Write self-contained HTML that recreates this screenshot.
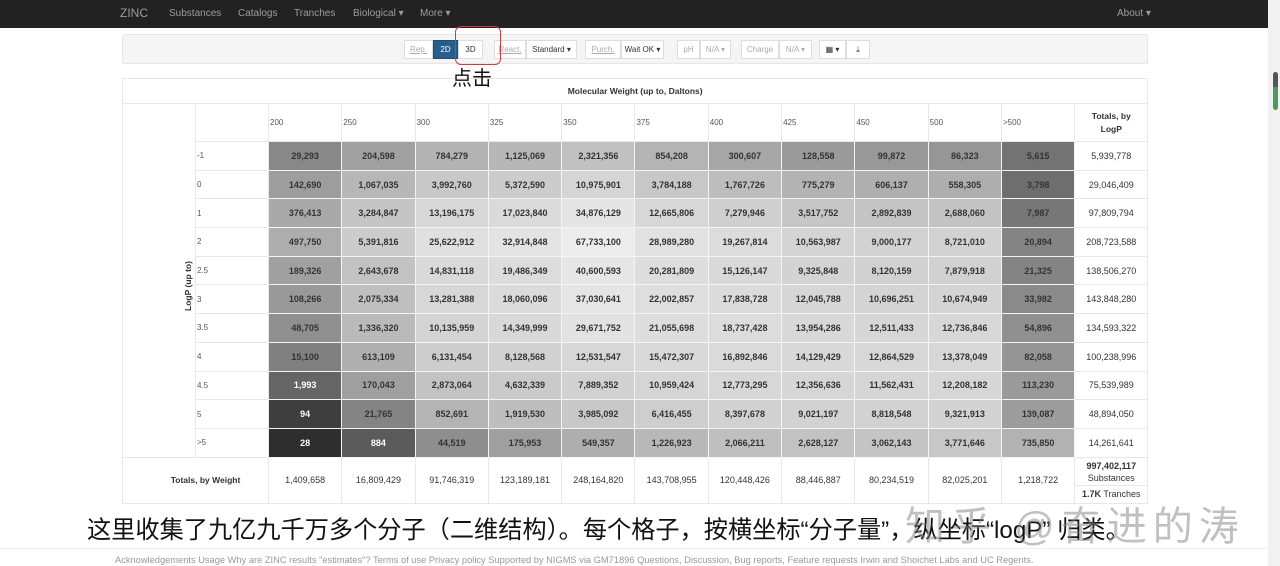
<!DOCTYPE html>
<html><head><meta charset="utf-8"><style>
*{box-sizing:border-box;margin:0;padding:0}
body{width:1280px;height:566px;overflow:hidden;background:#fff;font-family:"Liberation Sans",Arial,sans-serif;position:relative;color:#333}
.nav{position:absolute;left:0;top:0;width:1268px;height:28px;background:#222;color:#9d9d9d;font-size:10px}
.nav span{position:absolute;top:8px}
.sb{position:absolute;left:1268px;top:0;width:12px;height:566px;background:#f1f1f1}
.thumb{position:absolute;left:1273px;top:72px;width:5px;height:38px;border-radius:3px;background:linear-gradient(#555 0,#555 40%,#4c9a60 40%,#4c9a60 100%)}
.tb{position:absolute;left:122px;top:34px;width:1026px;height:30px;background:#f5f5f5;border:1px solid #e6e6e6;border-radius:2px}
.b{position:absolute;top:40px;height:19px;border:1px solid #ddd;background:#fff;font-size:8px;color:#333;text-align:center;line-height:17px}
.b.g{color:#aaa}
.b u{color:#aaa}
table{position:absolute;left:122px;top:78px;border-collapse:collapse;table-layout:fixed;width:1026px}
td{border:1px solid #e8e8e8;font-size:9px;text-align:center;height:28.7px;padding:0;color:#333;font-weight:bold}
td.w{font-weight:normal;background:#fff}
td.h{font-weight:normal;text-align:left;font-size:8px;color:#555;padding-left:1px}
.cap{position:absolute;left:87px;top:510px;font-size:24.2px;font-family:"Liberation Sans","Noto Sans CJK SC",sans-serif;color:#111;white-space:nowrap}
.wm{position:absolute;left:905px;top:494px;font-size:40px;font-family:"Liberation Sans","Noto Sans CJK SC",sans-serif;color:rgba(130,130,130,.5);white-space:nowrap;letter-spacing:6px}
.foot{position:absolute;left:0;top:548px;width:1268px;border-top:1px solid #eee;font-size:9.3px;color:#999;padding-left:115px;padding-top:6px;white-space:nowrap}
</style></head><body>
<div class="nav">
<span style="left:120px;top:6px;font-size:12px;color:#9d9d9d">ZINC</span>
<span style="left:169px">Substances</span><span style="left:238px">Catalogs</span><span style="left:294px">Tranches</span><span style="left:353px">Biological ▾</span><span style="left:420px">More ▾</span>
<span style="left:1117px">About ▾</span>
</div>
<div class="sb"></div><div class="thumb"></div>
<div class="tb"></div>
<div class="b g" style="left:404px;width:29px"><u>Rep.</u></div>
<div class="b" style="left:433px;width:25px;background:#285e8e;border-color:#204d74;color:#fff">2D</div>
<div class="b" style="left:458px;width:25px">3D</div>
<div class="b g" style="left:494px;width:32px"><u>React.</u></div>
<div class="b" style="left:526px;width:51px">Standard ▾</div>
<div class="b g" style="left:585px;width:36px"><u>Purch.</u></div>
<div class="b" style="left:621px;width:43px">Wait OK ▾</div>
<div class="b g" style="left:677px;width:23px">pH</div>
<div class="b g" style="left:700px;width:31px">N/A ▾</div>
<div class="b g" style="left:741px;width:38px">Charge</div>
<div class="b g" style="left:779px;width:33px">N/A ▾</div>
<div class="b" style="left:819px;width:27px">▦ ▾</div>
<div class="b" style="left:846px;width:24px">⤓</div>
<div style="position:absolute;left:455px;top:26px;width:46px;height:39px;border:1.5px solid #d43a3a;border-radius:6px"></div>
<table id="t">
<colgroup><col style="width:73px"><col style="width:73px"><col span="11" style="width:73.3px"><col style="width:73px"></colgroup>
<tr><td class="w" colspan="14" style="height:25px;font-weight:bold;font-size:8.5px">Molecular Weight (up to, Daltons)</td></tr>
<tr style="height:38px"><td class="w" rowspan="12" style="position:relative"><div style="position:absolute;left:60px;top:160px;transform:rotate(-90deg);transform-origin:left top;font-weight:bold;font-size:8.5px;white-space:nowrap;width:60px;margin-top:52px">LogP (up to)</div></td><td class="w"></td>
<td class="h">200</td><td class="h">250</td><td class="h">300</td><td class="h">325</td><td class="h">350</td><td class="h">375</td><td class="h">400</td><td class="h">425</td><td class="h">450</td><td class="h">500</td><td class="h">&gt;500</td><td class="w" style="font-weight:bold;font-size:8.5px;line-height:13px">Totals, by<br>LogP</td></tr>
<tr><td class="h">-1</td><td>29,293</td><td>204,598</td><td>784,279</td><td>1,125,069</td><td>2,321,356</td><td>854,208</td><td>300,607</td><td>128,558</td><td>99,872</td><td>86,323</td><td>5,615</td><td class="w">5,939,778</td></tr>
<tr><td class="h">0</td><td>142,690</td><td>1,067,035</td><td>3,992,760</td><td>5,372,590</td><td>10,975,901</td><td>3,784,188</td><td>1,767,726</td><td>775,279</td><td>606,137</td><td>558,305</td><td>3,798</td><td class="w">29,046,409</td></tr>
<tr><td class="h">1</td><td>376,413</td><td>3,284,847</td><td>13,196,175</td><td>17,023,840</td><td>34,876,129</td><td>12,665,806</td><td>7,279,946</td><td>3,517,752</td><td>2,892,839</td><td>2,688,060</td><td>7,987</td><td class="w">97,809,794</td></tr>
<tr><td class="h">2</td><td>497,750</td><td>5,391,816</td><td>25,622,912</td><td>32,914,848</td><td>67,733,100</td><td>28,989,280</td><td>19,267,814</td><td>10,563,987</td><td>9,000,177</td><td>8,721,010</td><td>20,894</td><td class="w">208,723,588</td></tr>
<tr><td class="h">2.5</td><td>189,326</td><td>2,643,678</td><td>14,831,118</td><td>19,486,349</td><td>40,600,593</td><td>20,281,809</td><td>15,126,147</td><td>9,325,848</td><td>8,120,159</td><td>7,879,918</td><td>21,325</td><td class="w">138,506,270</td></tr>
<tr><td class="h">3</td><td>108,266</td><td>2,075,334</td><td>13,281,388</td><td>18,060,096</td><td>37,030,641</td><td>22,002,857</td><td>17,838,728</td><td>12,045,788</td><td>10,696,251</td><td>10,674,949</td><td>33,982</td><td class="w">143,848,280</td></tr>
<tr><td class="h">3.5</td><td>48,705</td><td>1,336,320</td><td>10,135,959</td><td>14,349,999</td><td>29,671,752</td><td>21,055,698</td><td>18,737,428</td><td>13,954,286</td><td>12,511,433</td><td>12,736,846</td><td>54,896</td><td class="w">134,593,322</td></tr>
<tr><td class="h">4</td><td>15,100</td><td>613,109</td><td>6,131,454</td><td>8,128,568</td><td>12,531,547</td><td>15,472,307</td><td>16,892,846</td><td>14,129,429</td><td>12,864,529</td><td>13,378,049</td><td>82,058</td><td class="w">100,238,996</td></tr>
<tr><td class="h">4.5</td><td>1,993</td><td>170,043</td><td>2,873,064</td><td>4,632,339</td><td>7,889,352</td><td>10,959,424</td><td>12,773,295</td><td>12,356,636</td><td>11,562,431</td><td>12,208,182</td><td>113,230</td><td class="w">75,539,989</td></tr>
<tr><td class="h">5</td><td>94</td><td>21,765</td><td>852,691</td><td>1,919,530</td><td>3,985,092</td><td>6,416,455</td><td>8,397,678</td><td>9,021,197</td><td>8,818,548</td><td>9,321,913</td><td>139,087</td><td class="w">48,894,050</td></tr>
<tr><td class="h">&gt;5</td><td>28</td><td>884</td><td>44,519</td><td>175,953</td><td>549,357</td><td>1,226,923</td><td>2,066,211</td><td>2,628,127</td><td>3,062,143</td><td>3,771,646</td><td>735,850</td><td class="w">14,261,641</td></tr>
<tr style="height:46px"><td class="w" colspan="2" style="font-weight:bold;font-size:8.5px;padding-left:20px">Totals, by Weight</td>
<td class="w">1,409,658</td><td class="w">16,809,429</td><td class="w">91,746,319</td><td class="w">123,189,181</td><td class="w">248,164,820</td><td class="w">143,708,955</td><td class="w">120,448,426</td><td class="w">88,446,887</td><td class="w">80,234,519</td><td class="w">82,025,201</td><td class="w">1,218,722</td>
<td class="w" style="padding:0;vertical-align:top"><div style="height:28px;border-bottom:1px solid #e8e8e8;line-height:12px;padding-top:2px"><b>997,402,117</b><br>Substances</div><div style="line-height:16px"><b>1.7K</b> Tranches</div></td></tr>
</table>
<div style="position:absolute;left:452px;top:63px;font-size:20px;font-family:'Noto Sans CJK SC',sans-serif;color:#111;z-index:5;line-height:28px">点击</div>
<div class="cap">这里收集了九亿九千万多个分子（二维结构）。每个格子，按横坐标“分子量”，纵坐标“logP” 归类。</div>
<div class="wm">知乎 @奋进的涛</div>
<div class="foot">Acknowledgements Usage Why are ZINC results "estimates"? Terms of use Privacy policy Supported by NIGMS via GM71896 Questions, Discussion, Bug reports, Feature requests Irwin and Shoichet Labs and UC Regents.</div>
<script>
document.querySelectorAll('#t td:not(.w):not(.h)').forEach(function(c){
var v=parseInt(c.textContent.replace(/,/g,''));if(!v)return;
var g=Math.round(3+29.8*Math.log10(v));g=Math.max(40,Math.min(238,g));
c.style.background='rgb('+g+','+g+','+g+')';c.style.borderColor='#f4f4f4';
if(g<110)c.style.color='#fff';});
</script>
</body></html>
